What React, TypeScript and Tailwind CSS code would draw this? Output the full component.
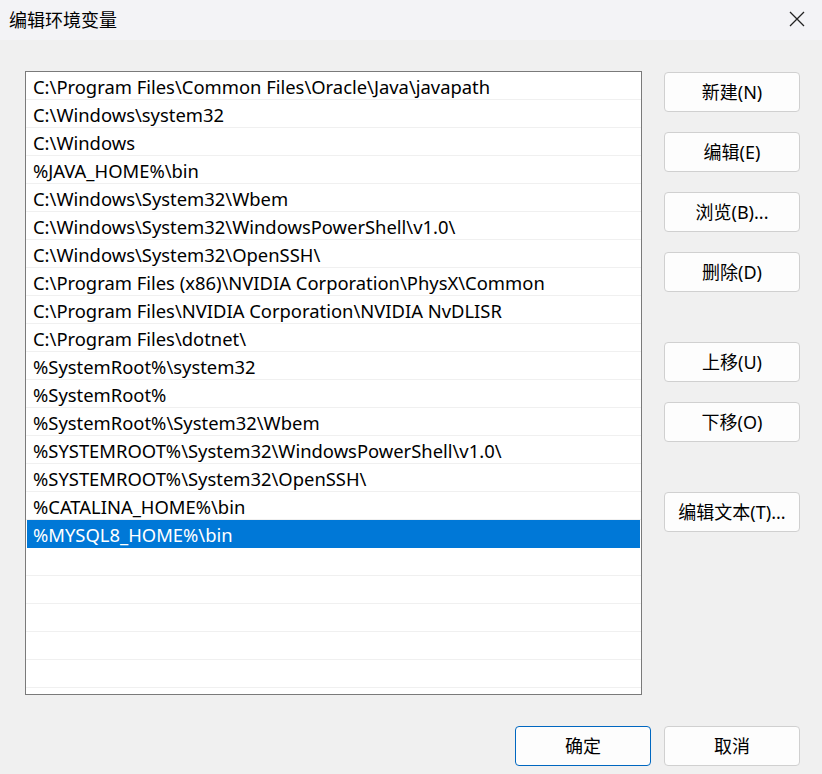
import React from "react";

const items = [
  "C:\\Program Files\\Common Files\\Oracle\\Java\\javapath",
  "C:\\Windows\\system32",
  "C:\\Windows",
  "%JAVA_HOME%\\bin",
  "C:\\Windows\\System32\\Wbem",
  "C:\\Windows\\System32\\WindowsPowerShell\\v1.0\\",
  "C:\\Windows\\System32\\OpenSSH\\",
  "C:\\Program Files (x86)\\NVIDIA Corporation\\PhysX\\Common",
  "C:\\Program Files\\NVIDIA Corporation\\NVIDIA NvDLISR",
  "C:\\Program Files\\dotnet\\",
  "%SystemRoot%\\system32",
  "%SystemRoot%",
  "%SystemRoot%\\System32\\Wbem",
  "%SYSTEMROOT%\\System32\\WindowsPowerShell\\v1.0\\",
  "%SYSTEMROOT%\\System32\\OpenSSH\\",
  "%CATALINA_HOME%\\bin",
  "%MYSQL8_HOME%\\bin",
];

function Btn({ label, primary }: { label: string; primary?: boolean }) {
  return (
    <button
      className={
        primary
          ? "w-[136px] h-[40px] rounded-[4px] border border-[#0067c0] bg-[#fdfdfd] text-[18px] text-black"
          : "w-[136px] h-[40px] rounded-[4px] border border-[#d0d0d0] bg-[#fdfdfd] text-[18px] text-black"
      }
    >
      {label}
    </button>
  );
}

export default function App() {
  const rows = [...items, "", "", "", "", "", ""];
  return (
    <div
      className="w-[822px] h-[774px] bg-[#f0f0f0] flex flex-col overflow-hidden"
      style={{ fontFamily: '"Noto Sans", "Noto Sans CJK SC", sans-serif' }}
    >
      <div className="h-[40px] bg-[#f3f3f6] flex items-center justify-between pl-[9px] pr-[14px] shrink-0">
        <span className="text-[18px] text-black">编辑环境变量</span>
        <svg width="16" height="16" viewBox="0 0 16 16" className="mr-[3px] -mt-[2px]">
          <path d="M1 1 L15 15 M15 1 L1 15" stroke="#222" strokeWidth="1.3" fill="none" />
        </svg>
      </div>
      <div className="flex pt-[31px] pl-[25px]">
        <div className="w-[617px] h-[624px] border border-[#7a7a7a] bg-white overflow-hidden">
          {rows.map((t, i) => {
            const sel = i === 16;
            return (
              <div
                key={i}
                className={
                  sel
                    ? "h-[28px] mx-[1px] bg-[#0078d7] text-white flex items-center pl-[6px] pt-[1px] text-[18.4px] whitespace-nowrap"
                    : "h-[28px] border-b border-[#f0f0f0] flex items-center pl-[7px] pt-[2px] text-[18.4px] text-black whitespace-nowrap"
                }
              >
                {t}
              </div>
            );
          })}
        </div>
        <div className="ml-[22px] mt-[1px] flex flex-col">
          <div className="flex flex-col gap-[20px]">
            <Btn label="新建(N)" />
            <Btn label="编辑(E)" />
            <Btn label="浏览(B)..." />
            <Btn label="删除(D)" />
          </div>
          <div className="flex flex-col gap-[20px] mt-[50px]">
            <Btn label="上移(U)" />
            <Btn label="下移(O)" />
          </div>
          <div className="mt-[50px]">
            <Btn label="编辑文本(T)..." />
          </div>
        </div>
      </div>
      <div className="flex justify-end gap-[13px] pr-[22px] mt-[31px]">
        <Btn label="确定" primary />
        <Btn label="取消" />
      </div>
    </div>
  );
}
